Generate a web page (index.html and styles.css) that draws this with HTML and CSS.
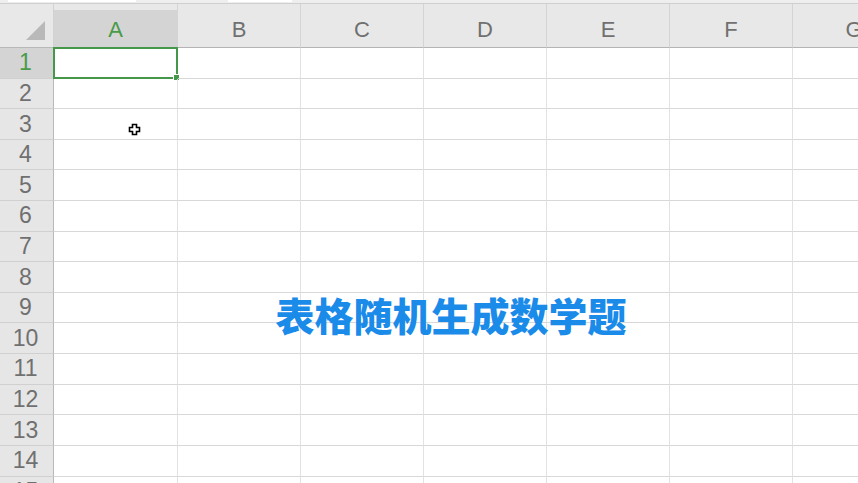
FILE: index.html
```html
<!DOCTYPE html>
<html lang="zh">
<head>
<meta charset="utf-8">
<link rel="stylesheet" href="styles.css">
</head>
<body>
<div class="app">
  <div class="topbar">
    <div class="tab tab-a"></div>
    <div class="tab tab-b"></div>
  </div>
  <div class="sheet">
    <div class="corner"><div class="tri"></div></div>
    <div class="ch sel">A</div>
    <div class="ch">B</div>
    <div class="ch">C</div>
    <div class="ch">D</div>
    <div class="ch">E</div>
    <div class="ch">F</div>
    <div class="ch last">G</div>

    <div class="rh sel">1</div><div class="c active"></div><div class="c"></div><div class="c"></div><div class="c"></div><div class="c"></div><div class="c"></div><div class="c"></div>
    <div class="rh">2</div><div class="c"></div><div class="c"></div><div class="c"></div><div class="c"></div><div class="c"></div><div class="c"></div><div class="c"></div>
    <div class="rh">3</div><div class="c"><svg class="cursor" width="13" height="13" viewBox="0 0 13 13"><path d="M4.5 1.5h4v3h3v4h-3v3h-4v-3h-3v-4h3z" fill="#fff" stroke="#000" stroke-width="1.6"/></svg></div><div class="c"></div><div class="c"></div><div class="c"></div><div class="c"></div><div class="c"></div><div class="c"></div>
    <div class="rh">4</div><div class="c"></div><div class="c"></div><div class="c"></div><div class="c"></div><div class="c"></div><div class="c"></div><div class="c"></div>
    <div class="rh">5</div><div class="c"></div><div class="c"></div><div class="c"></div><div class="c"></div><div class="c"></div><div class="c"></div><div class="c"></div>
    <div class="rh">6</div><div class="c"></div><div class="c"></div><div class="c"></div><div class="c"></div><div class="c"></div><div class="c"></div><div class="c"></div>
    <div class="rh">7</div><div class="c"></div><div class="c"></div><div class="c"></div><div class="c"></div><div class="c"></div><div class="c"></div><div class="c"></div>
    <div class="rh">8</div><div class="c"></div><div class="c"></div><div class="c"></div><div class="c"></div><div class="c"></div><div class="c"></div><div class="c"></div>
    <div class="rh">9</div><div class="c"></div><div class="c"></div><div class="c"></div><div class="c"></div><div class="c"></div><div class="c"></div><div class="c"></div>
    <div class="rh">10</div><div class="c"></div><div class="c"></div><div class="c"></div><div class="c"></div><div class="c"></div><div class="c"></div><div class="c"></div>
    <div class="rh">11</div><div class="c"></div><div class="c"></div><div class="c"></div><div class="c"></div><div class="c"></div><div class="c"></div><div class="c"></div>
    <div class="rh">12</div><div class="c"></div><div class="c"></div><div class="c"></div><div class="c"></div><div class="c"></div><div class="c"></div><div class="c"></div>
    <div class="rh">13</div><div class="c"></div><div class="c"></div><div class="c"></div><div class="c"></div><div class="c"></div><div class="c"></div><div class="c"></div>
    <div class="rh">14</div><div class="c"></div><div class="c"></div><div class="c"></div><div class="c"></div><div class="c"></div><div class="c"></div><div class="c"></div>
    <div class="rh">15</div><div class="c"></div><div class="c"></div><div class="c"></div><div class="c"></div><div class="c"></div><div class="c"></div><div class="c"></div>
  </div>
  <div class="title">表格随机生成数学题</div>
</div>
</body>
</html>
```

FILE: styles.css
```css
html, body {
  margin: 0;
  padding: 0;
  background: #ffffff;
  overflow: hidden;
}
.app {
  position: relative;
  width: 858px;
  height: 483px;
  overflow: hidden;
  font-family: "Liberation Sans", Arial, sans-serif;
}
.topbar {
  height: 3px;
  background: #eeeeee;
  border-bottom: 1px solid #cfcfcf;
  display: flex;
  gap: 92px;
  padding-left: 8px;
}
.tab {
  height: 2px;
  background: #ffffff;
}
.tab-a { width: 128px; }
.tab-b { width: 64px; }
.sheet {
  display: grid;
  grid-template-columns: 54px 124px repeat(6, 123px);
  grid-template-rows: 44px repeat(15, 30.62px);
}
.corner {
  background: #e8e8e8;
  border-right: 1px solid #d2d2d2;
  border-bottom: 1px solid #b8b8b8;
  display: flex;
  align-items: flex-end;
  justify-content: flex-end;
  padding: 0 8px 7px 0;
  box-sizing: border-box;
}
.tri {
  width: 0;
  height: 0;
  border-left: 19px solid transparent;
  border-bottom: 19px solid #b9b9b9;
}
.ch {
  background: #e8e8e8;
  border-right: 1px solid #d4d4d4;
  border-bottom: 1px solid #b4b4b4;
  box-sizing: border-box;
  display: flex;
  align-items: center;
  justify-content: center;
  padding-top: 8px;
  font-size: 22px;
  color: #707070;
}
.ch.sel {
  background: linear-gradient(#e8e8e8 0 6px, #d4d4d4 6px);
  color: #4a9a4a;
}
.rh {
  background: #e6e6e6;
  border-right: 1px solid #b9b9b9;
  border-bottom: 1px solid #d0d0d0;
  box-sizing: border-box;
  display: flex;
  align-items: center;
  justify-content: center;
  padding-right: 2px;
  font-size: 23px;
  color: #707070;
}
.rh.sel {
  background: #d4d4d4;
  color: #4a9a4a;
}
.c {
  border-right: 1px solid #e2e2e2;
  border-bottom: 1px solid #d8d8d8;
  box-sizing: border-box;
  position: relative;
}
.c.active {
  border: 2px solid #45984a;
  margin: -1px 0 0 -1px;
}
.c.active::after {
  content: "";
  position: absolute;
  right: -4px;
  bottom: -4px;
  width: 5px;
  height: 5px;
  background: #45984a;
  border: 1px solid #ffffff;
}
.cursor {
  position: absolute;
  left: 74px;
  top: 14px;
}
.title {
  position: absolute;
  left: 0;
  right: 0;
  top: 290px;
  padding-left: 44px;
  text-align: center;
  font-family: "Noto Sans CJK SC", sans-serif;
  font-weight: 900;
  font-size: 39px;
  line-height: 48px;
  color: #1a8be8;
}
```
